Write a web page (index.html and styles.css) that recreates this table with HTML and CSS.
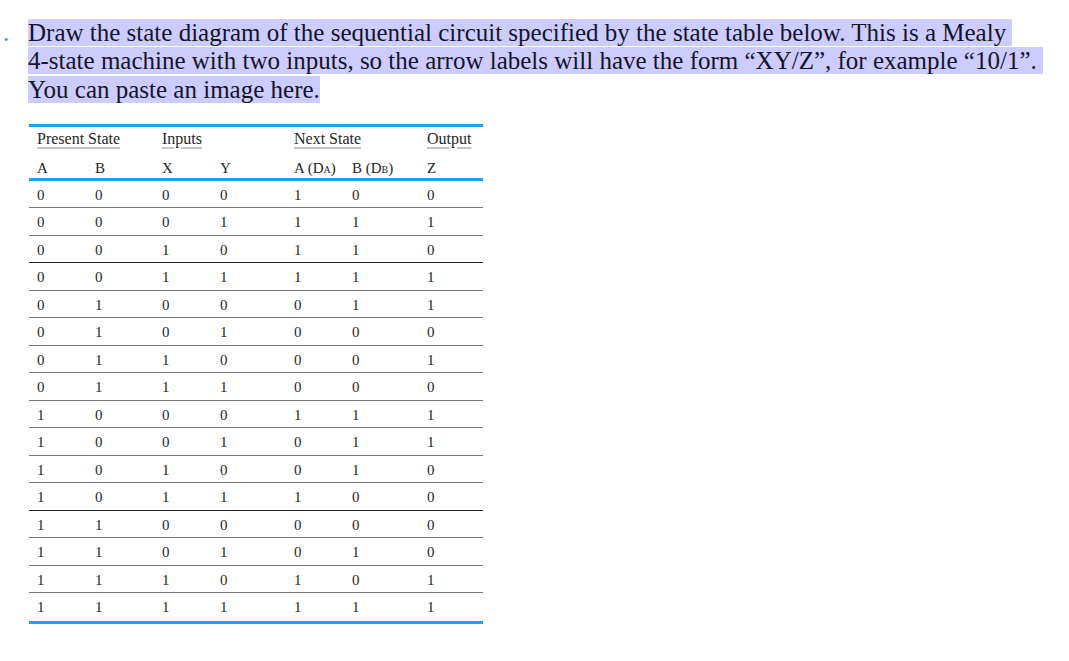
FILE: index.html
```html
<!DOCTYPE html>
<html>
<head>
<meta charset="utf-8">
<link rel="stylesheet" href="styles.css">
</head>
<body>
<div class="question">
  <span class="marker">.</span>
  <p class="prompt"><span class="hl">Draw the state diagram of the sequential circuit specified by the state table below. This is a Mealy&nbsp;</span><br><span class="hl">4-state machine with two inputs, so the arrow labels will have the form “XY/Z”, for example “10/1”.&nbsp;</span><br><span class="hl">You can paste an image here.</span></p>
</div>

<div class="tbl">
  <div class="hrow h1">
    <div class="c span2"><span class="ul">Present State</span></div>
    <div class="c span2"><span class="ul">Inputs</span></div>
    <div class="c span2"><span class="ul">Next State</span></div>
    <div class="c"><span class="ul">Output</span></div>
  </div>
  <div class="hrow h2">
    <div class="c">A</div>
    <div class="c">B</div>
    <div class="c">X</div>
    <div class="c">Y</div>
    <div class="c">A (D<span class="sc">A</span>)</div>
    <div class="c">B (D<span class="sc">B</span>)</div>
    <div class="c">Z</div>
  </div>
  <div class="row"><div class="c">0</div><div class="c">0</div><div class="c">0</div><div class="c">0</div><div class="c">1</div><div class="c">0</div><div class="c">0</div></div>
  <div class="row"><div class="c">0</div><div class="c">0</div><div class="c">0</div><div class="c">1</div><div class="c">1</div><div class="c">1</div><div class="c">1</div></div>
  <div class="row dark"><div class="c">0</div><div class="c">0</div><div class="c">1</div><div class="c">0</div><div class="c">1</div><div class="c">1</div><div class="c">0</div></div>
  <div class="row"><div class="c">0</div><div class="c">0</div><div class="c">1</div><div class="c">1</div><div class="c">1</div><div class="c">1</div><div class="c">1</div></div>
  <div class="row"><div class="c">0</div><div class="c">1</div><div class="c">0</div><div class="c">0</div><div class="c">0</div><div class="c">1</div><div class="c">1</div></div>
  <div class="row"><div class="c">0</div><div class="c">1</div><div class="c">0</div><div class="c">1</div><div class="c">0</div><div class="c">0</div><div class="c">0</div></div>
  <div class="row"><div class="c">0</div><div class="c">1</div><div class="c">1</div><div class="c">0</div><div class="c">0</div><div class="c">0</div><div class="c">1</div></div>
  <div class="row"><div class="c">0</div><div class="c">1</div><div class="c">1</div><div class="c">1</div><div class="c">0</div><div class="c">0</div><div class="c">0</div></div>
  <div class="row"><div class="c">1</div><div class="c">0</div><div class="c">0</div><div class="c">0</div><div class="c">1</div><div class="c">1</div><div class="c">1</div></div>
  <div class="row"><div class="c">1</div><div class="c">0</div><div class="c">0</div><div class="c">1</div><div class="c">0</div><div class="c">1</div><div class="c">1</div></div>
  <div class="row"><div class="c">1</div><div class="c">0</div><div class="c">1</div><div class="c">0</div><div class="c">0</div><div class="c">1</div><div class="c">0</div></div>
  <div class="row dark"><div class="c">1</div><div class="c">0</div><div class="c">1</div><div class="c">1</div><div class="c">1</div><div class="c">0</div><div class="c">0</div></div>
  <div class="row"><div class="c">1</div><div class="c">1</div><div class="c">0</div><div class="c">0</div><div class="c">0</div><div class="c">0</div><div class="c">0</div></div>
  <div class="row"><div class="c">1</div><div class="c">1</div><div class="c">0</div><div class="c">1</div><div class="c">0</div><div class="c">1</div><div class="c">0</div></div>
  <div class="row"><div class="c">1</div><div class="c">1</div><div class="c">1</div><div class="c">0</div><div class="c">1</div><div class="c">0</div><div class="c">1</div></div>
  <div class="row last"><div class="c">1</div><div class="c">1</div><div class="c">1</div><div class="c">1</div><div class="c">1</div><div class="c">1</div><div class="c">1</div></div>
</div>
</body>
</html>
```

FILE: styles.css
```css
html, body {
  margin: 0;
  padding: 0;
  background: #ffffff;
  overflow: hidden;
}

body {
  font-family: "Liberation Serif", "Times New Roman", serif;
  color: #14142a;
}

.question {
  display: flex;
  align-items: flex-start;
  padding-top: 18.6px;
}

.marker {
  flex: 0 0 auto;
  width: 25px;
  padding-left: 3px;
  font-size: 25px;
  line-height: 28.5px;
  color: #3a9ad9;
}

.prompt {
  margin: 0;
  font-size: 25px;
  line-height: 28.5px;
  white-space: nowrap;
}

.hl {
  background: #ccccff;
}

.tbl {
  --cols: 58px 67px 58px 74px 58px 75px 64px;
  width: 454px;
  margin: 19.5px 0 0 29px;
  border-top: 3px solid #1ba3e6;
  border-bottom: 3px solid #1ba3e6;
  font-size: 15px;
  color: #262626;
}

.hrow, .row {
  display: grid;
  grid-template-columns: var(--cols);
}

.c {
  padding-left: 8px;
}

.span2 {
  grid-column: span 2;
}

.h1 {
  height: 25px;
  line-height: 24px;
  font-size: 16px;
}

.h2 {
  height: 26px;
  line-height: 32px;
  border-bottom: 3px solid #1ba3e6;
}

.ul {
  text-decoration: underline;
  text-decoration-color: #c4c4c4;
  text-decoration-thickness: 2px;
  text-underline-offset: 3px;
}

.sc {
  font-size: 10px;
}

.row {
  height: 26.5px;
  line-height: 28px;
  border-bottom: 1px solid #7a7a7a;
}

.row.dark {
  border-bottom-color: #222222;
}

.row.last {
  border-bottom: 0;
  height: 27.5px;
}
```
